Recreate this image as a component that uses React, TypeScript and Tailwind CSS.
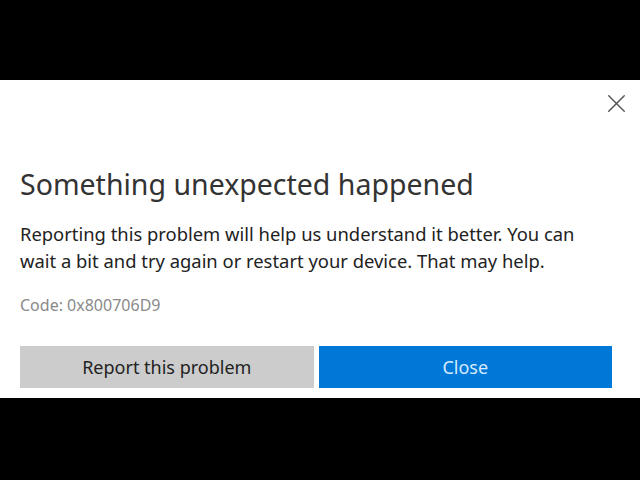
import { X } from "lucide-react";

export default function App() {
  return (
    <div className="flex h-[480px] w-[640px] flex-col bg-black font-['Noto_Sans',sans-serif]">
      <div className="h-[80px] shrink-0" />
      <div className="relative flex h-[318px] shrink-0 flex-col bg-white px-[20px] pt-[86px]">
        <button className="absolute right-[8px] top-[8px] text-[#555]">
          <X size={31} strokeWidth={1.1} />
        </button>
        <h1 className="text-[28.5px] leading-[36px] text-[#333]">Something unexpected happened</h1>
        <p className="mt-[18px] max-w-[570px] text-[18.4px] leading-[27px] text-[#222]">
          Reporting this problem will help us understand it better. You can wait a bit and try again or restart your device. That may help.
        </p>
        <p className="mt-[21px] text-[16px] leading-[20px] text-[#8a8a8a]">Code: 0x800706D9</p>
        <div className="mt-[31px] flex gap-[5px] pr-[8px]">
          <button className="h-[42px] flex-1 bg-[#cccccc] text-[18px] text-[#222]">Report this problem</button>
          <button className="h-[42px] flex-1 bg-[#0078d7] text-[18px] text-[#d6ebff]">Close</button>
        </div>
      </div>
      <div className="flex-1" />
    </div>
  );
}
